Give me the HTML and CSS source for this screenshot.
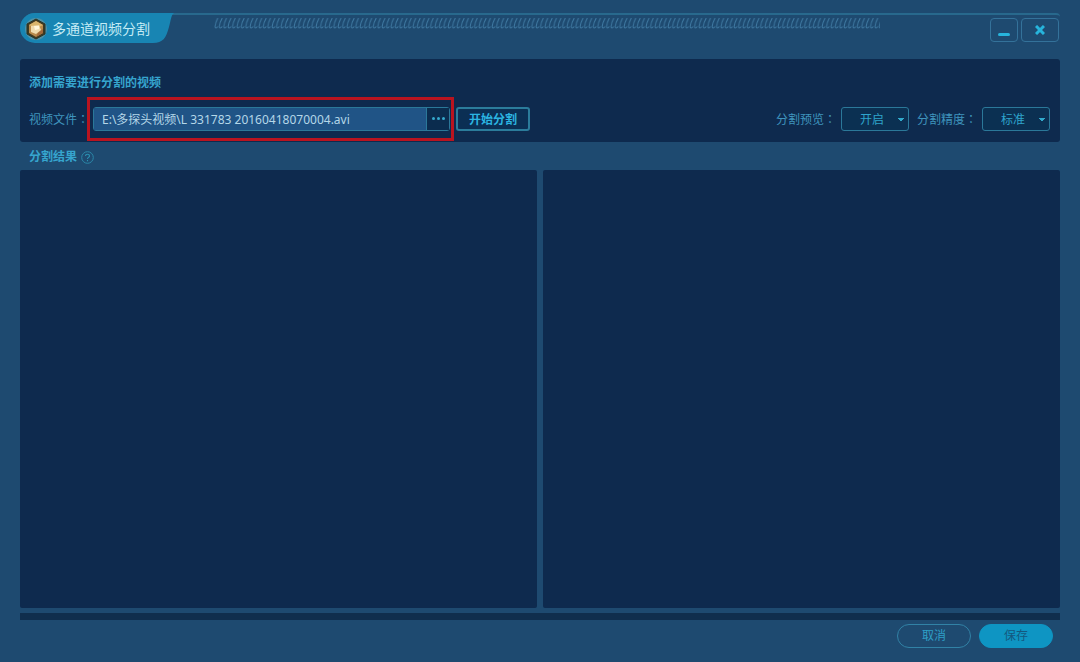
FILE: index.html
```
<!DOCTYPE html>
<html lang="zh-CN">
<head>
    <meta charset="UTF-8">
    <meta name="viewport" content="width=device-width, initial-scale=1.0">
    <title>多通道视频分割</title>
    <link rel="stylesheet" href="styles.css">
</head>
<body>
    <div class="window">
        <header class="titlebar">
            <div class="title-tab">
                <svg class="tab-shape" viewBox="0 0 154 31" preserveAspectRatio="none" aria-hidden="true">
                    <path d="M15 0H154C151 2 151 7 149 14C146 25 143 30 133 30H15A15 15 0 0 1 15 0Z" fill="#1885b3"/>
                </svg>
                <svg class="logo" viewBox="0 0 24 24" aria-hidden="true">
                    <circle cx="12" cy="12" r="11" fill="#6795a0" opacity=".7"/>
                    <path d="M12 2L21 7V17L12 22L3 17V7Z" fill="#3f3a20" stroke="#2b3527"/>
                    <path d="M12 4L19 8V16L12 20L5 16V8Z" fill="#b98a4b"/>
                    <path d="M12 4L19 8L15 10H9L5 8Z" fill="#d9b56c"/>
                    <path d="M7 9L15 8L17 13L12 17L7 15Z" fill="#f0dcae"/>
                    <path d="M10 9L15 9L15 12L11 13Z" fill="#fff7dc"/>
                    <path d="M12 20L19 16V12L14 16Z" fill="#a3683a"/>
                </svg>
                <h1 class="title">多通道视频分割</h1>
            </div>
            <svg class="hatch" aria-hidden="true">
                <defs>
                    <pattern id="hatch" width="4.4" height="13" patternUnits="userSpaceOnUse">
                        <path d="M3.8 0C2.2 3 1.2 6 1 8.5C1 10.5 2.4 10.5 3.8 8.5" fill="none" stroke="#3f79a2" stroke-width="1"/>
                    </pattern>
                </defs>
                <rect width="100%" height="13" fill="url(#hatch)"/>
            </svg>
            <div class="window-controls">
                <button type="button" class="control" aria-label="最小化">
                    <svg width="12" height="12" viewBox="0 0 12 12"><path d="M1.5 10.5H10.5" stroke="#27b4dc" stroke-width="3" stroke-linecap="round"/></svg>
                </button>
                <button type="button" class="control control-close" aria-label="关闭">
                    <svg width="10" height="10" viewBox="0 0 10 10"><path d="M1 1L9 9M9 1L1 9" stroke="#27b4dc" stroke-width="3"/></svg>
                </button>
            </div>
        </header>

        <main class="content">
            <section class="panel">
                <h2 class="heading">添加需要进行分割的视频</h2>
                <div class="toolbar">
                    <label for="video_file" class="label file-label">视频文件<span class="colon" lang="zh-TW">：</span></label>
                    <div class="file-picker">
                        <input type="text" id="video_file" class="file-input" value="E:\多探头视频\L 331783 20160418070004.avi">
                        <button type="button" class="browse" aria-label="浏览">
                            <svg width="13" height="5" viewBox="0 0 13 5"><g fill="#35a9cd"><circle cx="1.5" cy="1.5" r="1.5"/><circle cx="6.5" cy="1.5" r="1.5"/><circle cx="11.5" cy="1.5" r="1.5"/></g></svg>
                        </button>
                    </div>
                    <button type="button" class="start">开始分割</button>
                    <div class="options">
                        <label for="preview" class="label">分割预览<span class="colon" lang="zh-TW">：</span></label>
                        <select id="preview" class="select">
                            <option selected>开启</option>
                            <option>关闭</option>
                        </select>
                        <label for="precision" class="label">分割精度<span class="colon" lang="zh-TW">：</span></label>
                        <select id="precision" class="select">
                            <option selected>标准</option>
                            <option>精细</option>
                        </select>
                    </div>
                </div>
            </section>

            <div class="result-header">
                <h2 class="heading">分割结果</h2>
                <svg class="help" viewBox="0 0 13 13" aria-hidden="true">
                    <circle cx="6.5" cy="6.5" r="5.8" fill="none" stroke="#2b87a8"/>
                    <path d="M4.5 5C4.5 2.6 8.5 2.6 8.5 5C8.5 6.4 6.5 6.4 6.5 8M6.5 9V10.3" fill="none" stroke="#2b93b4" stroke-width="1.1"/>
                </svg>
            </div>

            <div class="results">
                <section class="pane"></section>
                <section class="pane"></section>
            </div>
            <div class="progress"></div>
        </main>

        <footer class="actions">
            <button type="button" class="action">取消</button>
            <button type="button" class="action action-save">保存</button>
        </footer>
    </div>
</body>
</html>
```

FILE: styles.css
```
:root {
    --color-window: #1e4a70;
    --color-panel: #0e2a4e;
    --color-line: #2b7899;
    --color-text: #3f94bd;
    --color-heading: #36a5ce;
    --color-accent: #2bb5e2;
    --color-mark: #b9141f;
}

* {
    box-sizing: border-box;
}

body {
    margin: 0;
    background-color: var(--color-window);
    color: var(--color-text);
    font-family: "Noto Sans", "Noto Sans CJK SC", sans-serif;
    font-size: 12px;
    line-height: 18px;
}

button,
input,
select {
    font: inherit;
}

button {
    padding: 0;
    cursor: pointer;
}

.window {
    display: flex;
    flex-direction: column;
    min-height: 100vh;
    padding: 13px 20px 14px;
}

/* Barre de titre */
.titlebar {
    display: flex;
    align-items: flex-start;
    height: 46px;
    border-top: 2px solid #28698d;
    border-radius: 15px 4px 0 0;
}

.title-tab {
    position: relative;
    display: flex;
    align-items: center;
    gap: 4px;
    width: 154px;
    height: 31px;
    margin-top: -2px;
    padding-left: 4px;
}

.tab-shape {
    position: absolute;
    inset: 0;
    width: 100%;
    height: 100%;
}

.logo {
    position: relative;
    width: 24px;
    height: 24px;
}

.title {
    position: relative;
    margin: 0;
    font-size: 14px;
    font-weight: 400;
    color: #c5ecf5;
}

.hatch {
    flex: 1;
    height: 13px;
    margin: 3px 110px 0 40px;
}

.window-controls {
    display: flex;
    gap: 3px;
    margin: 3px 1px 0 0;
}

.control {
    display: flex;
    align-items: center;
    justify-content: center;
    width: 28px;
    height: 24px;
    background-color: transparent;
    border: 1px solid #34729a;
    border-radius: 4px;
}

.control-close {
    width: 38px;
}

.content {
    display: flex;
    flex: 1;
    flex-direction: column;
}

.panel {
    padding: 15px 10px 11px 9px;
    background-color: var(--color-panel);
    border-radius: 3px;
}

.heading {
    margin: 0;
    font-size: 12px;
    font-weight: 700;
    color: var(--color-heading);
}

.toolbar {
    display: flex;
    align-items: center;
    margin-top: 15px;
}

.label {
    white-space: nowrap;
}

/* Deux-points centrés dans leur case */
.colon {
    font-family: "Noto Sans CJK TC", sans-serif;
}

.file-label {
    width: 64px;
}

.file-picker {
    position: relative;
    display: flex;
    width: 357px;
    height: 24px;
    border: 1px solid var(--color-line);
    border-radius: 3px;
}

/* Cadre rouge autour du fichier */
.file-picker::after {
    content: "";
    position: absolute;
    inset: -11px -5px -11px -7px;
    border: 3px solid var(--color-mark);
    pointer-events: none;
}

.file-input {
    flex: 1;
    min-width: 0;
    padding: 2px 8px 0;
    background-color: #205486;
    border: 0;
    color: #b4d7e8;
}

.browse {
    display: flex;
    align-items: center;
    justify-content: center;
    width: 23px;
    background-color: #0b2c4e;
    border: 0;
    border-left: 1px solid var(--color-line);
}

.start {
    width: 74px;
    height: 24px;
    margin-left: 6px;
    padding-top: 2px;
    background-color: #0b2f54;
    border: 2px solid #2b7c9b;
    border-radius: 3px;
    font-weight: 700;
    line-height: 18px;
    color: var(--color-accent);
}

.options {
    display: flex;
    align-items: center;
    gap: 5px;
    margin-left: auto;
}

.select {
    width: 68px;
    height: 24px;
    margin-right: 3px;
    padding: 2px 8px 0 18px;
    appearance: none;
    background-color: #0b3052;
    background-image: linear-gradient(to bottom right, #31a9cb 50%, transparent 50%), linear-gradient(to bottom left, #31a9cb 50%, transparent 50%);
    background-position: right 4px top 10px, right 7px top 10px;
    background-repeat: no-repeat;
    background-size: 3px 4px;
    border: 1px solid var(--color-line);
    border-radius: 3px;
    color: #2ea4cc;
}

.select:last-child {
    margin-right: 0;
}

.result-header {
    display: flex;
    align-items: center;
    gap: 4px;
    height: 28px;
    padding: 2px 0 0 9px;
}

.help {
    width: 13px;
    height: 13px;
}

.results {
    display: flex;
    flex: 1;
    gap: 6px;
}

.pane {
    flex: 1;
    background-color: var(--color-panel);
    border-radius: 2px;
}

.progress {
    height: 7px;
    margin-top: 5px;
    background-color: #102e4d;
}

.actions {
    display: flex;
    justify-content: flex-end;
    gap: 8px;
    margin-top: 4px;
    padding-right: 7px;
}

.action {
    width: 74px;
    height: 24px;
    background-color: transparent;
    border: 1px solid #3182a6;
    border-radius: 12px;
    color: #2f9fc7;
}

.action-save {
    background-color: #0e95c3;
    border-color: #0e95c3;
    color: #14587f;
}
```
